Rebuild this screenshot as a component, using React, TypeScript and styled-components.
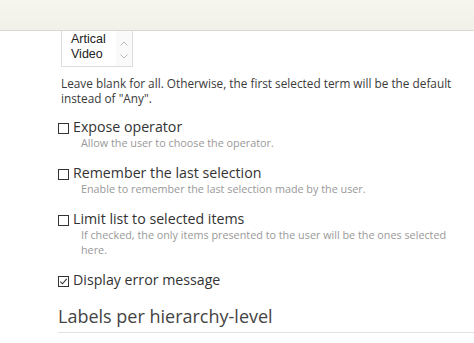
import React from 'react';
import styled, {createGlobalStyle} from 'styled-components';

const GlobalStyle = createGlobalStyle`
  html, body {
    margin: 0;
    padding: 0;
    background: #fff;
  }
  body {
    font-family: 'Open Sans', 'Liberation Sans', sans-serif;
    overflow: hidden;
  }
`;

type Option = {label: string; description?: string; checked?: boolean};

const OPTIONS: Option[] = [
  {label: 'Expose operator', description: 'Allow the user to choose the operator.'},
  {
    label: 'Remember the last selection',
    description: 'Enable to remember the last selection made by the user.',
  },
  {
    label: 'Limit list to selected items',
    description:
      'If checked, the only items presented to the user will be the ones selected here.',
  },
  {label: 'Display error message', checked: true},
];

const CheckBox: React.FC<{checked?: boolean}> = ({checked}) => (
  <BoxIcon width="11" height="11" viewBox="0 0 11 11">
    <rect x="0.5" y="0.5" width="10" height="10" fill="#fff" stroke="#333" strokeWidth="1" />
    {checked && (
      <path d="M2.3 5.6 L4.5 7.8 L8.7 2.9" fill="none" stroke="#333" strokeWidth="1.1" />
    )}
  </BoxIcon>
);

const Chevron: React.FC<{up?: boolean}> = ({up}) => (
  <svg width="8" height="5" viewBox="0 0 8 5">
    <path
      d={up ? 'M0.5 4.5 L4 1 L7.5 4.5' : 'M0.5 0.5 L4 4 L7.5 0.5'}
      fill="none"
      stroke="#b8b8b8"
      strokeWidth="1"
    />
  </svg>
);

export default function App() {
  return (
    <Page>
      <GlobalStyle />
      <TopBar />
      <Content>
        <Indented>
          <SelectList>
            <SelectItems>
              <span>Artical</span>
              <span>Video</span>
            </SelectItems>
            <ScrollCol>
              <Chevron up />
              <Chevron />
            </ScrollCol>
          </SelectList>
          <HelpText>
            Leave blank for all. Otherwise, the first selected term will be the default
            instead of "Any".
          </HelpText>
        </Indented>
        <OptionList>
          {OPTIONS.map(o => (
            <OptionItem key={o.label}>
              <OptionLabel>
                <CheckBox checked={o.checked} />
                <span>{o.label}</span>
              </OptionLabel>
              {o.description && <OptionDesc>{o.description}</OptionDesc>}
            </OptionItem>
          ))}
        </OptionList>
        <SectionTitle>Labels per hierarchy-level</SectionTitle>
        <Rule />
      </Content>
    </Page>
  );
}

const Page = styled.div`
  width: 474px;
  height: 343px;
  overflow: hidden;
  background: #fff;
`;

const TopBar = styled.div`
  height: 30px;
  background: linear-gradient(#f6f6ef, #f1f1ea);
  border-bottom: 1px solid #d9d9d0;
`;

const Content = styled.div`
  padding-left: 58px;
`;

const Indented = styled.div`
  padding-left: 3px;
`;

const SelectList = styled.div`
  display: flex;
  width: 70px;
  height: 35px;
  border: 1px solid #dcdcdc;
  border-top: none;
`;

const SelectItems = styled.div`
  flex: 1;
  display: flex;
  flex-direction: column;
  padding: 1px 0 0 9px;
  font-family: 'Liberation Sans', Arial, sans-serif;
  font-size: 12.5px;
  line-height: 15px;
  color: #222;
`;

const ScrollCol = styled.div`
  width: 16px;
  display: flex;
  flex-direction: column;
  justify-content: space-between;
  align-items: center;
  padding: 10px 0 7px;
  background: #fafafa;
`;

const HelpText = styled.p`
  margin: 9px 0 0;
  width: 405px;
  font-size: 11.8px;
  line-height: 15px;
  color: #3a3a3a;
`;

const OptionList = styled.div`
  margin-top: 13px;
  display: flex;
  flex-direction: column;
  gap: 15px;
`;

const OptionItem = styled.div`
  display: flex;
  flex-direction: column;
`;

const OptionLabel = styled.label`
  display: flex;
  align-items: baseline;
  gap: 4px;
  height: 16px;
  line-height: 16px;
  font-size: 14.2px;
  color: #333;
`;

const BoxIcon = styled.svg`
  flex: none;
  align-self: flex-end;
  margin-bottom: 1px;
`;

const OptionDesc = styled.div`
  padding-left: 23px;
  width: 385px;
  font-size: 10.8px;
  line-height: 15px;
  color: #999;
`;

const SectionTitle = styled.h2`
  margin: 16px 0 0;
  font-size: 18px;
  font-weight: 400;
  line-height: 24px;
  color: #444;
`;

const Rule = styled.div`
  margin-top: 4px;
  height: 1px;
  background: #e2e2e2;
`;
